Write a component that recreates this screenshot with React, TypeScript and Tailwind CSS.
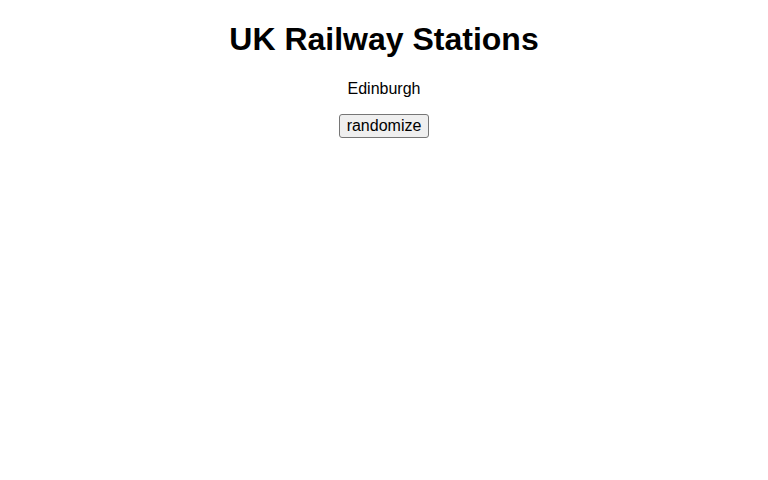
export default function App() {
  return (
    <div className="text-center text-black bg-white min-h-[480px] pt-[21.44px]" style={{ fontFamily: '"Liberation Sans", Arial, sans-serif' }}>
      <h1 className="text-[32px] font-bold leading-[normal] mb-[21.44px]">UK Railway Stations</h1>
      <p className="text-[16px] leading-[normal] mb-[16px]">Edinburgh</p>
      <button className="text-[16px] leading-[normal] bg-[#efefef] border border-[#767676] rounded-[3px] px-[7px] py-[2px] text-black">randomize</button>
    </div>
  );
}
